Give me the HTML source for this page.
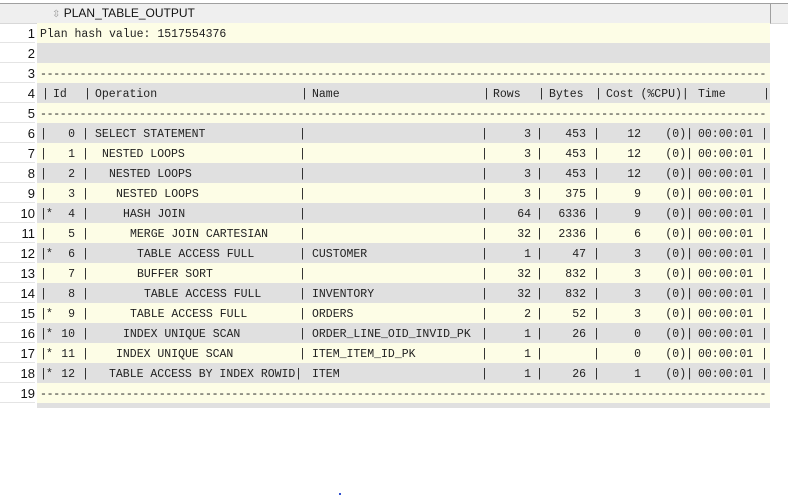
<!DOCTYPE html>
<html><head><meta charset="utf-8"><style>
body{margin:0;width:788px;height:499px;background:#fff;overflow:hidden;position:relative;font-family:"Liberation Mono",monospace;font-size:11.5px;color:#222}
.hdr{position:absolute;left:0;top:3px;width:770px;height:19px;background:#efefef;border-top:1px solid #a0a0a0;border-bottom:1px solid #d8d8d8}
.hdr2{position:absolute;left:770px;top:3px;width:18px;height:19px;background:#efefef;border-top:1px solid #a0a0a0;border-left:1px solid #a0a0a0;border-bottom:1px solid #d8d8d8}
.ht{position:absolute;left:52px;top:6px;font-family:"Liberation Sans",sans-serif;font-size:12px;color:#111}
.r{position:absolute;left:37px;width:733px;height:20px;line-height:20px;white-space:pre}
.y{background:#fdfde6}.g{background:#e0e0e0}
.n{position:absolute;left:0;width:35px;text-align:right;height:20px;line-height:22px;font-family:"Liberation Sans",sans-serif;font-size:13px;color:#111;border-bottom:1px solid #e4e4e4;box-sizing:border-box;padding-right:0}
.r span{position:absolute;top:2px}
.R{transform:translateX(-100%)}
.d{left:3px;width:728px;overflow:hidden;letter-spacing:-0.3px}
</style></head><body>
<div class="hdr"></div><div class="hdr2"></div>
<div class="ht"><span style="color:#999;font-size:10px">⇳</span> PLAN_TABLE_OUTPUT</div>
<div id="c"></div>
<div class="n" style="top:23px">1</div><div class="r y" style="top:23px"><span style="left:3px">Plan hash value: 1517554376</span></div>
<div class="n" style="top:43px">2</div><div class="r g" style="top:43px"></div>
<div class="n" style="top:63px">3</div><div class="r y" style="top:63px"><span class="d">------------------------------------------------------------------------------------------------------------------</span></div>
<div class="n" style="top:83px">4</div><div class="r g" style="top:83px"><span style="left:5px">|</span><span style="left:16px">Id</span><span style="left:47px">|</span><span style="left:58px">Operation</span><span style="left:264px">|</span><span style="left:275px">Name</span><span style="left:446px">|</span><span style="left:456px">Rows</span><span style="left:501px">|</span><span style="left:512px">Bytes</span><span style="left:558px">|</span><span style="left:569px">Cost (%CPU)|</span><span style="left:661px">Time</span><span style="left:726px">|</span></div>
<div class="n" style="top:103px">5</div><div class="r y" style="top:103px"><span class="d">------------------------------------------------------------------------------------------------------------------</span></div>
<div class="n" style="top:383px">19</div><div class="r y" style="top:383px"><span class="d">------------------------------------------------------------------------------------------------------------------</span></div>
<div style="position:absolute;left:37px;top:403px;width:733px;height:5px;background:#e0e0e0"></div>
<div style="position:absolute;left:339px;top:493px;width:2px;height:2px;background:#3050d0"></div>
<script>
var rows=[["",0,0,"SELECT STATEMENT","",3,453,12],["",1,1,"NESTED LOOPS","",3,453,12],["",2,2,"NESTED LOOPS","",3,453,12],["",3,3,"NESTED LOOPS","",3,375,9],["*",4,4,"HASH JOIN","",64,6336,9],["",5,5,"MERGE JOIN CARTESIAN","",32,2336,6],["*",6,6,"TABLE ACCESS FULL","CUSTOMER",1,47,3],["",7,6,"BUFFER SORT","",32,832,3],["",8,7,"TABLE ACCESS FULL","INVENTORY",32,832,3],["*",9,5,"TABLE ACCESS FULL","ORDERS",2,52,3],["*",10,4,"INDEX UNIQUE SCAN","ORDER_LINE_OID_INVID_PK",1,26,0],["*",11,3,"INDEX UNIQUE SCAN","ITEM_ITEM_ID_PK",1,"",0],["*",12,2,"TABLE ACCESS BY INDEX ROWID","ITEM",1,26,1]];
var h="";
rows.forEach(function(r,i){var t=123+i*20,cl=i%2?"y":"g";
h+='<div class="n" style="top:'+t+'px">'+(6+i)+'</div><div class="r '+cl+'" style="top:'+t+'px">'+
'<span style="left:3px">|</span><span style="left:9px">'+r[0]+'</span><span class="R" style="left:38px">'+r[1]+'</span><span style="left:45px">|</span>'+
'<span style="left:'+(58+r[2]*7)+'px">'+r[3]+'</span><span style="left:'+(i==12?258:262)+'px">|</span><span style="left:275px">'+r[4]+'</span>'+
'<span style="left:444px">|</span><span class="R" style="left:494px">'+r[5]+'</span><span style="left:499px">|</span><span class="R" style="left:549px">'+r[6]+'</span><span style="left:556px">|</span><span class="R" style="left:604px">'+r[7]+'</span><span class="R" style="left:656px">(0)|</span><span style="left:661px">00:00:01</span><span style="left:724px">|</span></div>';});
document.getElementById("c").innerHTML=h;
</script>
</body></html>
